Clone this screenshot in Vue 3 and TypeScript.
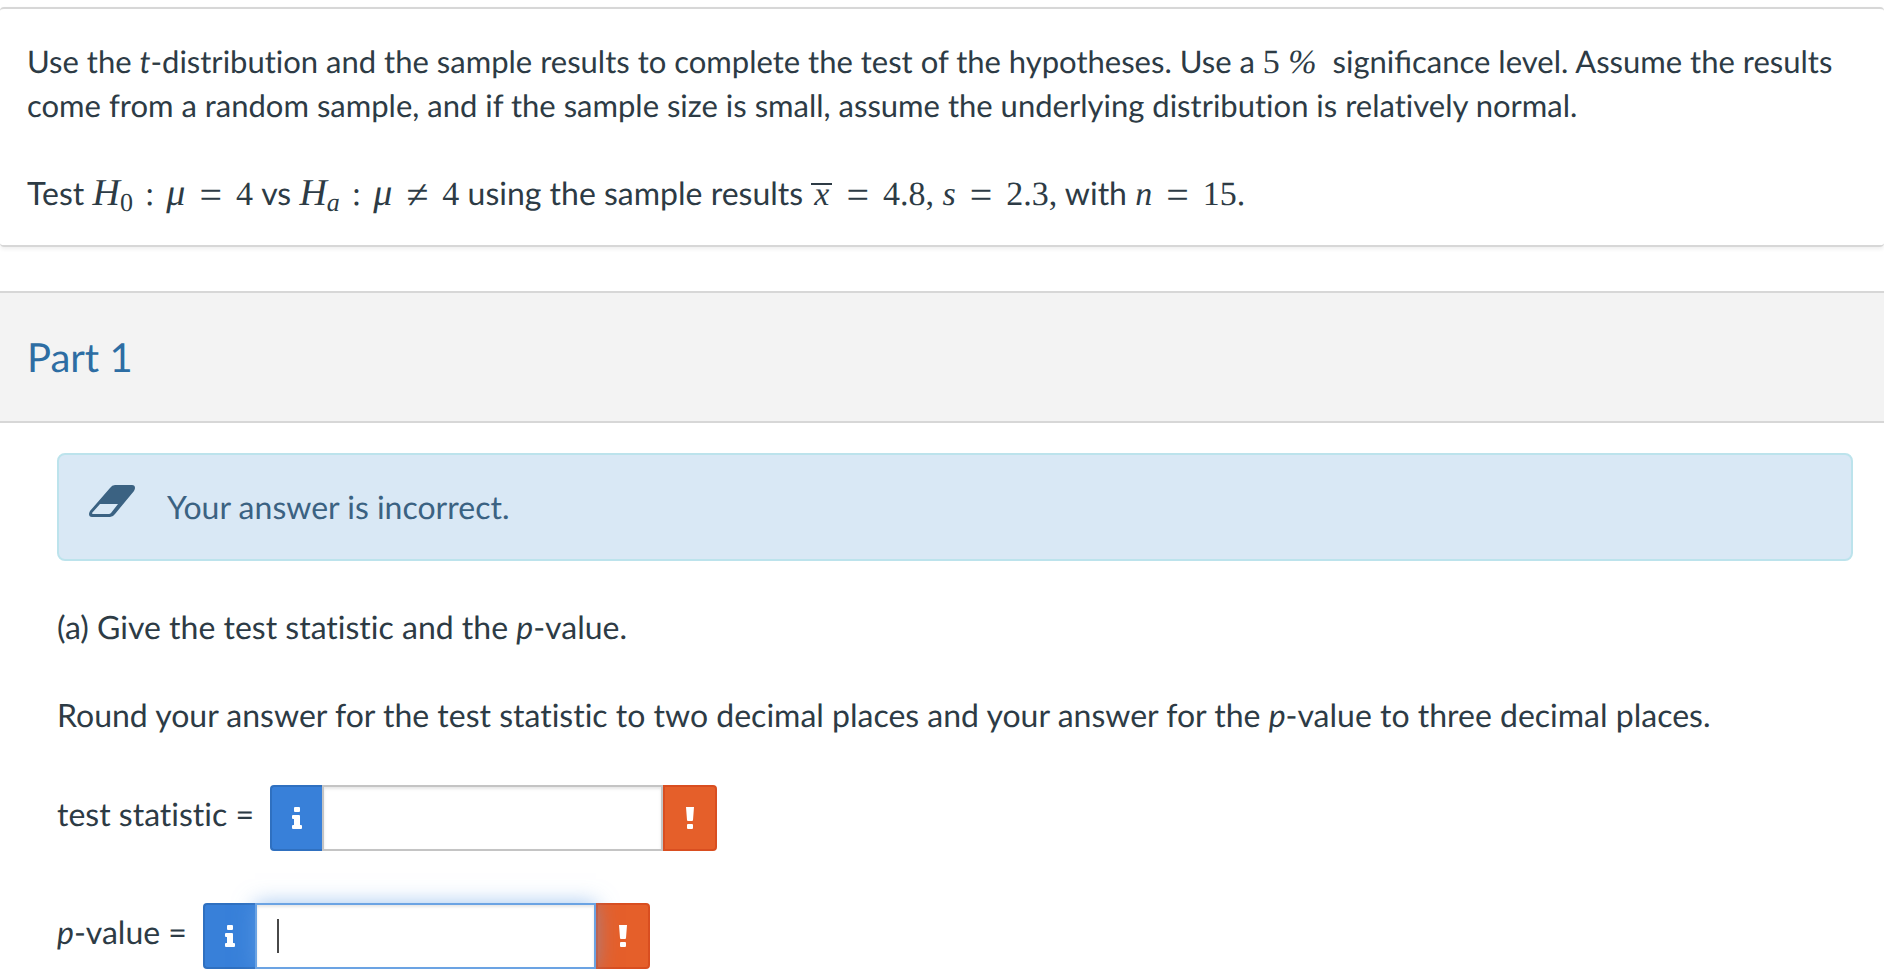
<script setup lang="ts">
import { ref } from 'vue'

interface Field {
  id: string
  prefix: string
  label: string
  active: boolean
}

const fields: Field[] = [
  { id: 'test-statistic', prefix: '', label: 'test statistic =', active: false },
  { id: 'p-value', prefix: 'p', label: '-value =', active: true },
]
const answers = ref<Record<string, string>>({ 'test-statistic': '', 'p-value': '' })
</script>

<template>
  <main class="page">
    <section class="question">
      <p class="intro">
        Use the <i>t</i>-distribution and the sample results to complete the test of the hypotheses. Use a
        <span class="math">5 <i class="percent">%</i></span> <span class="ligated">significance</span> level. Assume the
        results come from a random sample, and if the sample size is small, assume the underlying distribution is
        relatively normal.
      </p>
      <p>
        Test
        <span class="math"><i class="big">H</i><sub>0</sub><span class="colon">:</span><i class="big">μ</i><span class="rel">=</span>4</span>
        vs
        <span class="math"><i class="big">H</i><sub><i>a</i></sub><span class="colon">:</span><i class="big">μ</i><span class="rel">≠</span>4</span>
        using the sample results
        <span class="math"><i class="bar">x</i><span class="rel">=</span>4.8, <i>s</i><span class="rel">=</span>2.3,</span>
        with
        <span class="math"><i>n</i><span class="rel">=</span>15.</span>
      </p>
    </section>

    <section class="part">
      <header class="part-header"><h2>Part 1</h2></header>
      <div class="part-body">
        <div class="alert" role="status">
          <svg class="eraser" viewBox="0 0 46 32" aria-hidden="true">
            <path
              fill-rule="evenodd"
              d="M26 0H43Q46 0 46 3Q46 4 45 6L26 29Q24 32 21 32H3Q0 32 0 29Q0 28 1 26L21 3Q23 0 26 0ZM11 19L3 28Q3 29 4 29H20Q21 29 22 28L29 19Z"
            />
          </svg>
          <span>Your answer is incorrect.</span>
        </div>
        <p>(a) Give the test statistic and the <i>p</i>-value.</p>
        <p>
          Round your answer for the test statistic to two decimal places and your answer for the <i>p</i>-value to three
          decimal places.
        </p>
        <form class="fields" @submit.prevent>
          <div v-for="field in fields" :key="field.id" class="field">
            <label :for="field.id"><i v-if="field.prefix">{{ field.prefix }}</i>{{ field.label }}</label>
            <div class="group" :class="{ active: field.active }">
              <button type="button" class="info" aria-label="Information">
                <svg viewBox="0 0 12 22" aria-hidden="true">
                  <path d="M4 0H8Q9 0 9 1V4Q9 5 8 5H4Q3 5 3 4V1Q3 0 4 0ZM2 8H8Q9 8 9 9V18H10Q11 18 11 19V21Q11 22 10 22H2Q1 22 1 21V19Q1 18 2 18H3V12H2Q1 12 1 11V9Q1 8 2 8Z" />
                </svg>
              </button>
              <div class="entry">
                <input :id="field.id" v-model="answers[field.id]" type="text" autocomplete="off" />
                <span v-if="field.active" class="caret"></span>
              </div>
              <button type="button" class="warn" aria-label="Incorrect answer">
                <svg viewBox="0 0 12 22" aria-hidden="true">
                  <path d="M2 0H10L9 13Q9 14 8 14H4Q3 14 3 13ZM4 17H8Q9 17 9 18V21Q9 22 8 22H4Q3 22 3 21V18Q3 17 4 17Z" />
                </svg>
              </button>
            </div>
          </div>
        </form>
      </div>
    </section>
  </main>
</template>

<style>
body {
  margin: 0;
  background: #fff;
}
</style>

<style scoped>
.page {
  padding-top: 7px;
  color: #2d3b45;
  font: 32px/44px Lato, 'Liberation Sans', sans-serif;
  font-variant-ligatures: none;
  text-rendering: geometricPrecision;
}
p {
  margin: 0 0 44px;
}
.question {
  padding: 30px 24px 30px 27px;
  border-top: 2px solid #d7d7d7;
  border-bottom: 2px solid #d7d7d7;
  border-radius: 4px;
  box-shadow: 0 2px 4px rgba(0, 0, 0, 0.07);
}
.question p:last-child {
  margin-bottom: 0;
}
.intro {
  font-size: 31px;
}
.ligated {
  font-variant-ligatures: normal;
}
.math {
  font-family: 'Liberation Serif', 'Times New Roman', serif;
  font-size: 34px;
  line-height: 0;
  white-space: nowrap;
}
.percent {
  margin-right: 8px;
}
.big {
  font-size: 38px;
}
.math sub {
  font-size: 26px;
  line-height: 0;
  vertical-align: -6px;
}
.colon {
  margin: 0 12px;
}
.rel {
  margin: 0 14px;
  font-size: 40px;
  vertical-align: -3px;
}
.bar {
  display: inline-block;
  line-height: 20px;
  padding: 0 3px;
  border-top: 2px solid #2d3b45;
}
.part {
  margin-top: 44px;
}
.part-header {
  padding: 40px 27px;
  border-top: 2px solid #d7d7d7;
  border-bottom: 2px solid #d7d7d7;
  background: #f3f3f3;
}
.part-header h2 {
  margin: 0;
  color: #2d6da3;
  font-size: 40px;
  font-weight: 400;
  line-height: 48px;
}
.part-body {
  padding: 30px 31px 0 57px;
}
.alert {
  display: flex;
  align-items: flex-start;
  gap: 32px;
  margin-bottom: 44px;
  padding: 30px;
  border: 2px solid #bce3ec;
  border-radius: 8px;
  background: #d9e8f5;
  color: #3b6282;
}
.eraser {
  flex: none;
  width: 46px;
  height: 32px;
  fill: #3b6282;
}
.fields {
  display: flex;
  flex-direction: column;
  gap: 52px;
  padding-top: 4px;
}
.field {
  display: flex;
  align-items: flex-start;
  gap: 16px;
}
.field label {
  padding-top: 7px;
}
.group {
  display: flex;
  height: 66px;
}
.group button {
  display: flex;
  align-items: center;
  justify-content: center;
  padding: 0;
  border: 2px solid;
}
.group svg {
  width: 12px;
  height: 22px;
  fill: #fff;
}
.group .info {
  width: 52px;
  border-color: #2f70c0;
  border-right: 0;
  border-radius: 4px 0 0 4px;
  background: #3880d9;
}
.group .warn {
  width: 54px;
  border-color: #d94e20;
  border-radius: 0 4px 4px 0;
  background: #e55f2a;
}
.entry {
  position: relative;
  width: 341px;
}
.entry input {
  box-sizing: border-box;
  width: 100%;
  height: 100%;
  padding: 0 22px;
  border: 2px solid #c4c4c4;
  outline: 0;
  background: #fff;
  box-shadow: inset 0 2px 3px rgba(0, 0, 0, 0.1);
  color: inherit;
  font: inherit;
}
.active input {
  border-color: #6ba3e3;
  box-shadow:
    inset 0 2px 3px rgba(0, 0, 0, 0.1),
    0 0 20px rgba(102, 160, 230, 0.6);
}
.caret {
  position: absolute;
  top: 16px;
  left: 22px;
  width: 2px;
  height: 34px;
  background: #484848;
}
</style>
